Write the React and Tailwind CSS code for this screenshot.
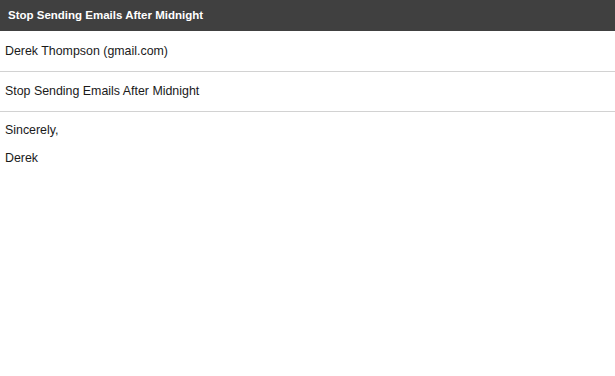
export default function App() {
  return (
    <div className="w-[615px] h-[376px] bg-white font-['Liberation_Sans',Arial,sans-serif] text-[12.4px] text-[#1a1a1a]">
      {/* Title bar */}
      <div className="h-[31px] bg-[#404040] flex items-center px-[8px]">
        <span className="text-white font-bold text-[11.5px]">Stop Sending Emails After Midnight</span>
      </div>

      {/* From */}
      <div className="h-[41px] border-b border-[#d2d2d2] flex items-center px-[5px]">
        Derek Thompson (gmail.com)
      </div>

      {/* Subject */}
      <div className="h-[40px] border-b border-[#d2d2d2] flex items-center px-[5px]">
        Stop Sending Emails After Midnight
      </div>

      {/* Body */}
      <div className="px-[5px] pt-[11px] flex flex-col gap-[14px] leading-[14px]">
        <p>Sincerely,</p>
        <p>Derek</p>
      </div>
    </div>
  );
}
